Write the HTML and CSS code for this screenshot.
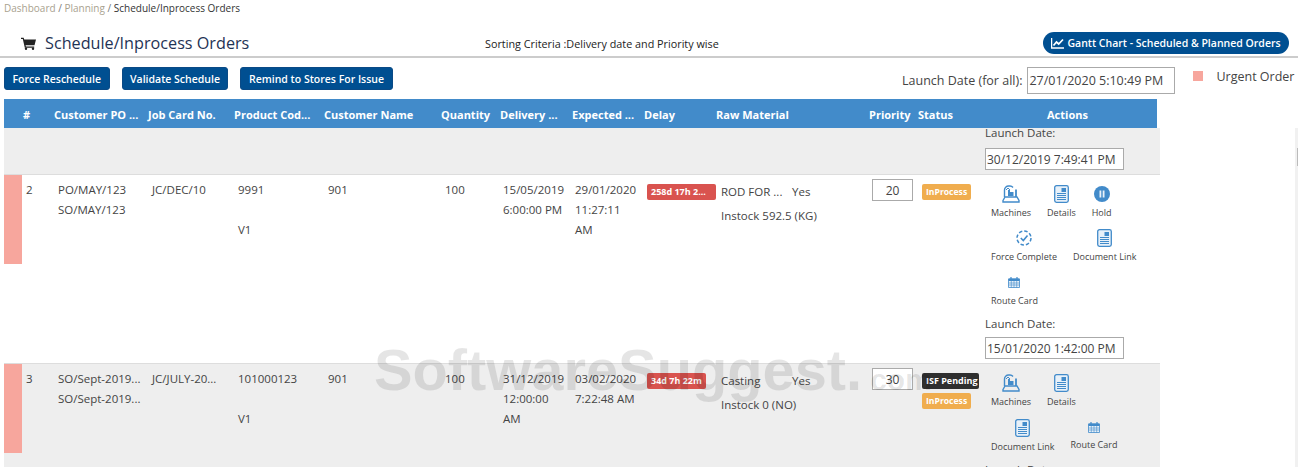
FILE: index.html
```html
<!DOCTYPE html>
<html lang="en">
<head>
<meta charset="utf-8">
<title>Schedule/Inprocess Orders</title>
<link rel="stylesheet" href="styles.css">
</head>
<body>
<svg class="sprite" width="0" height="0" aria-hidden="true">
  <symbol id="i-machine" viewBox="0 0 20 18">
    <path d="M3.500 12V5a4 4 0 0 1 4-4h1.500a4 4 0 0 1 3 1.500" fill="none" stroke="#428bca" stroke-width="1.400"/>
    <path d="M2 15.500 4 12h12l2 3.500v1.500H2z" fill="none" stroke="#428bca" stroke-width="1.400"/>
    <path d="M7 5h2v6H7zM9 7h3.500v4H9z" fill="#428bca"/>
    <path d="M15 4.500v7.500" stroke="#428bca" stroke-width="1.800"/>
    <path d="M5 5 7 3 9 5" fill="none" stroke="#428bca" stroke-width="1"/>
  </symbol>
  <symbol id="i-doc" viewBox="0 0 15 18">
    <path d="M2.500.7h10a1.800 1.800 0 0 1 1.800 1.800v13a1.800 1.800 0 0 1-1.800 1.800h-10A1.800 1.800 0 0 1 .7 15.500v-13A1.800 1.800 0 0 1 2.500.7z" fill="#e8f1f9" stroke="#428bca" stroke-width="1.300"/>
    <path d="M7.500 3h4.500v4H7.500z" fill="#428bca"/>
    <path d="M3 8.500h9M3 10.500h9M3 12.500h9M3 14.500h9" stroke="#428bca" stroke-width="1.100"/>
  </symbol>
  <symbol id="i-hold" viewBox="0 0 16 16">
    <circle cx="8" cy="8" r="8" fill="#428bca"/>
    <path d="M5.500 4.500h1.800v7H5.500zM8.700 4.500h1.800v7H8.700z" fill="#e8f1f9"/>
  </symbol>
  <symbol id="i-force" viewBox="0 0 16 16">
    <circle cx="8" cy="8" r="7" fill="none" stroke="#428bca" stroke-width="1.500" stroke-dasharray="3.500 2"/>
    <path d="M4.800 8 7.300 10.500 11.500 5.500" fill="none" stroke="#428bca" stroke-width="1.600"/>
  </symbol>
  <symbol id="i-cal" viewBox="0 0 12 11">
    <path d="M.5 2h11v8.500H.5z" fill="#e8f1f9" stroke="#428bca" stroke-width=".8"/>
    <path d="M.5 1.500h11V4H.5z" fill="#428bca"/>
    <path d="M3 0v2M9 0v2" stroke="#428bca" stroke-width="1.200"/>
    <path d="M.5 6h11M.5 8h11M3.300 4v6.500M6 4v6.500M8.700 4v6.500" stroke="#428bca" stroke-width=".6"/>
  </symbol>
</svg>

<nav class="crumbs"><span class="crumb-link">Dashboard</span> / <span class="crumb-link">Planning</span> / <span class="crumb-now">Schedule/Inprocess Orders</span></nav>

<header class="title-bar">
  <h1 class="page-title">
    <svg class="cart" viewBox="0 0 15 13" aria-hidden="true"><path d="M0 .8h2.700l.5 1.700H15l-1.500 5.800H4.600l.3 1.200h8.300v1.200H3.800L1.800 2H0z" fill="#222"/><circle cx="5" cy="11.800" r="1.200" fill="#222"/><circle cx="12" cy="11.800" r="1.200" fill="#222"/></svg>
    Schedule/Inprocess Orders
  </h1>
  <p class="sort-note">Sorting Criteria :Delivery date and Priority wise</p>
  <a class="gantt-btn">
    <svg class="gantt-ico" viewBox="0 0 13 11" aria-hidden="true"><path d="M.6 0v10h12.400" fill="none" stroke="#fff" stroke-width="1.300"/><path d="M2.500 7.500 5.500 4l2.200 2L12 1.500" fill="none" stroke="#fff" stroke-width="1.700"/></svg>
    Gantt Chart - Scheduled &amp; Planned Orders
  </a>
</header>

<section class="tools">
  <div class="btn-row">
    <button class="btn">Force Reschedule</button>
    <button class="btn">Validate Schedule</button>
    <button class="btn">Remind to Stores For Issue</button>
  </div>
  <label class="launch-all">Launch Date (for all):<input class="date-input date-all" value="27/01/2020 5:10:49 PM"></label>
  <div class="legend"><i class="swatch"></i>Urgent Order</div>
</section>

<section class="table">
  <div class="thead">
    <div class="th th-num">#</div>
    <div class="th">Customer PO ...</div>
    <div class="th">Job Card No.</div>
    <div class="th">Product Cod...</div>
    <div class="th">Customer Name</div>
    <div class="th">Quantity</div>
    <div class="th">Delivery ...</div>
    <div class="th">Expected ...</div>
    <div class="th">Delay</div>
    <div class="th">Raw Material</div>
    <div class="th">Priority</div>
    <div class="th">Status</div>
    <div class="th th-act">Actions</div>
  </div>

  <div class="row row-alt row-partial">
    <div class="launch-cell">
      <div class="launch-label">Launch Date:</div>
      <input class="date-input" value="30/12/2019 7:49:41 PM">
    </div>
  </div>

  <div class="row">
    <div class="urgent"></div>
    <div class="td td-num">2</div>
    <div class="td">PO/MAY/123<br>SO/MAY/123</div>
    <div class="td">JC/DEC/10</div>
    <div class="td">9991<br><br>V1</div>
    <div class="td">901</div>
    <div class="td">100</div>
    <div class="td">15/05/2019<br>6:00:00 PM</div>
    <div class="td">29/01/2020<br>11:27:11<br>AM</div>
    <div class="td td-delay"><span class="badge badge-red badge-clip">258d 17h 2...</span></div>
    <div class="td td-raw"><div class="raw-top"><span class="raw-name">ROD FOR ...</span><span>Yes</span></div><div class="raw-stock">Instock 592.5 (KG)</div></div>
    <div class="td td-prio"><input class="prio" value="20"></div>
    <div class="td td-status"><span class="badge badge-orange">InProcess</span></div>
    <div class="td-actions">
      <div class="actions">
        <a class="act"><span class="ico"><svg class="s-m"><use href="#i-machine"/></svg></span>Machines</a>
        <a class="act"><span class="ico"><svg class="s-d"><use href="#i-doc"/></svg></span>Details</a>
        <a class="act"><span class="ico"><svg class="s-h"><use href="#i-hold"/></svg></span>Hold</a>
        <a class="act"><span class="ico"><svg class="s-h"><use href="#i-force"/></svg></span>Force Complete</a>
        <a class="act"><span class="ico"><svg class="s-d"><use href="#i-doc"/></svg></span>Document Link</a>
        <a class="act"><span class="ico"><svg class="s-c"><use href="#i-cal"/></svg></span>Route Card</a>
      </div>
      <div class="launch-label">Launch Date:</div>
      <input class="date-input" value="15/01/2020 1:42:00 PM">
    </div>
  </div>

  <div class="row row-alt">
    <div class="urgent"></div>
    <div class="td td-num">3</div>
    <div class="td">SO/Sept-2019...<br>SO/Sept-2019...</div>
    <div class="td">JC/JULY-20...</div>
    <div class="td">101000123<br><br>V1</div>
    <div class="td">901</div>
    <div class="td">100</div>
    <div class="td">31/12/2019<br>12:00:00<br>AM</div>
    <div class="td">03/02/2020<br>7:22:48 AM</div>
    <div class="td td-delay"><span class="badge badge-red">34d 7h 22m</span></div>
    <div class="td td-raw"><div class="raw-top"><span class="raw-name">Casting</span><span>Yes</span></div><div class="raw-stock">Instock 0 (NO)</div></div>
    <div class="td td-prio"><input class="prio" value="30"></div>
    <div class="td td-status"><span class="badge badge-dark">ISF Pending</span><span class="badge badge-orange">InProcess</span></div>
    <div class="td-actions">
      <div class="actions actions-loose">
        <a class="act"><span class="ico"><svg class="s-m"><use href="#i-machine"/></svg></span>Machines</a>
        <a class="act"><span class="ico"><svg class="s-d"><use href="#i-doc"/></svg></span>Details</a>
        <a class="act"><span class="ico"><svg class="s-d"><use href="#i-doc"/></svg></span>Document Link</a>
        <a class="act"><span class="ico ico-small"><svg class="s-c"><use href="#i-cal"/></svg></span>Route Card</a>
      </div>
      <div class="launch-label">Launch Date:</div>
    </div>
  </div>
</section>

<div class="scroll-track"><i class="scroll-thumb"></i></div>
<div class="watermark">SoftwareSuggest.<span class="wm-com">com</span></div>
</body>
</html>
```

FILE: styles.css
```css
* { box-sizing: border-box; }
html, body { height: 467px; overflow: hidden; }
body {
  margin: 0;
  position: relative;
  background: #fff;
  color: #444;
  font-family: "Open Sans", sans-serif;
  font-size: 12px;
}
.sprite { position: absolute; }

.crumbs {
  height: 17px;
  padding: 2px 0 0 4px;
  font-size: 10px;
  line-height: 13px;
  color: #777;
}
.crumb-link { color: #a9a28f; }
.crumb-now { color: #333; }

.title-bar {
  height: 41px;
  display: grid;
  grid-template-columns: 481px 558px auto;
  align-items: center;
  border-bottom: 2px solid #ccc;
  padding: 13px 0 0 4px;
}
.page-title {
  margin: 0;
  padding-left: 17px;
  font-size: 16.200px;
  font-weight: 400;
  color: #1f3355;
  display: flex;
  align-items: center;
  gap: 9px;
}
.cart { width: 15px; height: 13px; }
.sort-note { margin: 0; font-size: 10.800px; color: #222; }
.gantt-btn {
  width: 246px;
  height: 22px;
  background: #004f91;
  border-radius: 11px;
  color: #fff;
  font-size: 10.500px;
  font-weight: 600;
  display: flex;
  align-items: center;
  justify-content: center;
  gap: 3px;
}
.gantt-ico { width: 13px; height: 11px; }

.tools {
  height: 41px;
  padding: 9px 0 0 4px;
  display: flex;
  align-items: flex-start;
}
.btn-row { display: flex; gap: 12px; width: 898px; }
.btn {
  height: 23px;
  padding: 0 7.500px;
  background: #004f91;
  border: 1px solid #0a4a86;
  border-radius: 3px;
  color: #fff;
  font: 600 10.500px "Open Sans", sans-serif;
}
.launch-all { display: flex; align-items: center; gap: 5px; height: 27px; color: #444; font-size: 12.500px; }
.date-input {
  display: block;
  height: 22px;
  width: 139px;
  padding: 0 1px;
  border: 1px solid #aaa;
  background: #fff;
  color: #444;
  font: 12px "Open Sans", sans-serif;
}
.date-all { width: 148px; height: 27px; font-size: 12.500px; }
.legend { display: flex; align-items: center; margin-left: 18px; font-size: 12.500px; height: 18px; }
.swatch { width: 10px; height: 10px; margin-right: 13px; background: #f7a69d; }

.table { width: 1156px; margin-left: 4px; }
.thead, .row {
  display: grid;
  grid-template-columns: 18px 32px 94px 86px 90px 117px 58px 72px 73px 72px 153px 49px 62px 180px;
}
.thead {
  width: 1153px;
  height: 29px;
  background: #428bca;
  color: #fff;
  font-weight: 700;
  font-size: 11px;
  line-height: 31px;
  grid-template-columns: 50px 94px 86px 90px 117px 59px 72px 72px 72px 153px 49px 62px 177px;
}
.th { white-space: nowrap; }
.th-num { padding-left: 19px; }
.th-act { padding-left: 67px; }

.row {
  border-top: 1px solid #ddd;
  height: 189px;
  background: #fff;
}
.row-alt { background: #eee; }
.row-partial {
  display: flex;
  justify-content: flex-end;
  height: 46px;
  border-top: 0;
  padding: 0;
}
.launch-cell { width: 175px; }
.launch-label { height: 17px; line-height: 17px; font-size: 11.500px; margin-top: 7px; color: #444; }
.row-partial .launch-label { height: 13px; line-height: 10px; margin-top: 0; }
.row-partial .date-input { margin-top: 7px; }
.td-actions .date-input { margin-top: 5px; }

.urgent { width: 18px; height: 89px; background: #f7a69d; }
.td {
  padding: 5px 0 0 4px;
  font-size: 11.500px;
  line-height: 20px;
  white-space: nowrap;
}
.td-delay { padding: 9px 0 0 3px; line-height: 0; }
.td-raw { padding: 0 0 0 5px; }
.raw-top { display: flex; padding-top: 7px; }
.raw-name { width: 71px; }
.raw-stock { padding-top: 4px; }
.td-prio { padding: 4px 0 0 3px; }
.prio {
  display: block;
  width: 41px;
  height: 22px;
  border: 1px solid #aaa;
  background: #fff;
  color: #444;
  text-align: center;
  font: 12px "Open Sans", sans-serif;
  padding: 0;
}
.td-status { padding: 9px 0 0 4px; line-height: 0; }
.badge {
  display: block;
  width: max-content;
  height: 16px;
  padding: 0 4px;
  border-radius: 2px;
  color: #fff;
  font-size: 9px;
  font-weight: 700;
  line-height: 16px;
}
.badge + .badge { margin-top: 4px; }
.badge-red { background: #d9534f; }
.badge-clip { width: 69px; overflow: hidden; }
.badge-orange { background: #f0ad4e; font-size: 8.600px; }
.badge-dark { background: #2f2f2f; width: 57px; }

.td-actions { padding-left: 5px; }
.actions {
  display: flex;
  flex-wrap: wrap;
  align-items: flex-start;
  width: 165px;
  column-gap: 16px;
  row-gap: 8px;
  padding: 9px 0 0 6px;
}
.actions-loose { row-gap: 9px; }
.act {
  display: block;
  font-size: 9px;
  line-height: 14px;
  color: #444;
  text-align: center;
  white-space: nowrap;
}
.ico { display: flex; height: 20px; margin-bottom: 2px; align-items: center; justify-content: center; }
.ico-small { height: 18px; }
.ico svg { display: block; }
.s-m { width: 20px; height: 18px; }
.s-d { width: 15px; height: 18px; }
.s-h { width: 16px; height: 16px; }
.s-c { width: 12px; height: 11px; }

.scroll-track {
  position: absolute;
  top: 128px;
  right: 0;
  width: 3px;
  height: 339px;
  background: #f1f1f1;
}
.scroll-thumb {
  display: block;
  width: 1px;
  height: 18px;
  margin: 20px 0 0 2px;
  background: #bbb;
}
.watermark {
  position: absolute;
  left: 374px;
  top: 335px;
  font-family: "Liberation Sans", sans-serif;
  font-size: 57.800px;
  font-weight: 700;
  line-height: 70px;
  color: rgba(0, 0, 0, .1);
  white-space: nowrap;
  pointer-events: none;
}
.wm-com { font-size: 30px; margin-left: 8px; }
```
